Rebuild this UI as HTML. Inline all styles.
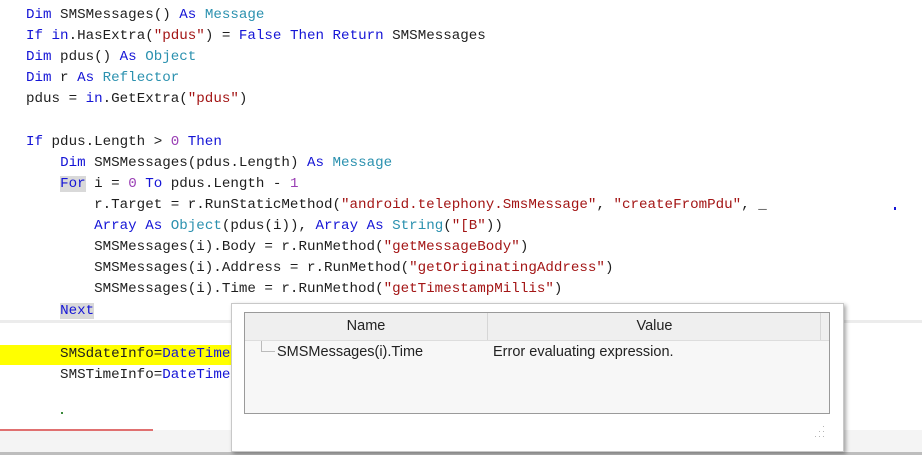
<!DOCTYPE html>
<html><head><meta charset="utf-8"><style>
html,body{margin:0;padding:0;}
body{width:922px;height:455px;position:relative;overflow:hidden;background:#fff;font-family:"Liberation Mono",monospace;font-size:14.2px;color:#1e1e1e;}
.l{position:absolute;left:26px;height:21px;line-height:21px;white-space:pre;}
.k{color:#1515d6}.t{color:#2b91af}.s{color:#a31515}.n{color:#9a3fb5}
.hl{background:#d9d9d9}
.pop{position:absolute;left:231px;top:303px;width:611px;height:147px;background:#fff;border:1px solid #c8c8c8;box-shadow:2px 2px 4px rgba(0,0,0,.35);font-family:"Liberation Sans",sans-serif;font-size:14.5px;color:#222;}
.tbl{position:absolute;left:12px;top:8px;width:584px;height:100px;border:1px solid #9a9a9a;background:#f7f7f7;}
.hd{position:absolute;left:0;top:0;width:584px;height:27px;background:#efefef;border-bottom:1px solid #ddd;}
</style></head><body>
<div class="l" style="top:5px"><span class="k">Dim</span> SMSMessages() <span class="k">As</span> <span class="t">Message</span></div>
<div class="l" style="top:26px"><span class="k">If</span> <span class="k">in</span>.HasExtra(<span class="s">"pdus"</span>) = <span class="k">False</span> <span class="k">Then</span> <span class="k">Return</span> SMSMessages</div>
<div class="l" style="top:47px"><span class="k">Dim</span> pdus() <span class="k">As</span> <span class="t">Object</span></div>
<div class="l" style="top:68px"><span class="k">Dim</span> r <span class="k">As</span> <span class="t">Reflector</span></div>
<div class="l" style="top:89px">pdus = <span class="k">in</span>.GetExtra(<span class="s">"pdus"</span>)</div>
<div class="l" style="top:132px"><span class="k">If</span> pdus.Length &gt; <span class="n">0</span> <span class="k">Then</span></div>
<div class="l" style="top:153px">    <span class="k">Dim</span> SMSMessages(pdus.Length) <span class="k">As</span> <span class="t">Message</span></div>
<div class="l" style="top:174px">    <span class="k hl">For</span> i = <span class="n">0</span> <span class="k">To</span> pdus.Length - <span class="n">1</span></div>
<div class="l" style="top:195px">        r.Target = r.RunStaticMethod(<span class="s">"android.telephony.SmsMessage"</span>, <span class="s">"createFromPdu"</span>, _</div>
<div class="l" style="top:216px">        <span class="k">Array</span> <span class="k">As</span> <span class="t">Object</span>(pdus(i)), <span class="k">Array</span> <span class="k">As</span> <span class="t">String</span>(<span class="s">"[B"</span>))</div>
<div class="l" style="top:237px">        SMSMessages(i).Body = r.RunMethod(<span class="s">"getMessageBody"</span>)</div>
<div class="l" style="top:258px">        SMSMessages(i).Address = r.RunMethod(<span class="s">"getOriginatingAddress"</span>)</div>
<div class="l" style="top:279px">        SMSMessages(i).Time = r.RunMethod(<span class="s">"getTimestampMillis"</span>)</div>
<div style="position:absolute;left:0;top:320px;width:922px;height:3px;background:#ececec"></div>
<div class="l" style="top:301px">    <span class="k hl">Next</span></div>
<div style="position:absolute;left:0;top:345px;width:232px;height:20px;background:#ffff00"></div>
<div class="l" style="top:344px">    SMSdateInfo=<span class="k">DateTime</span></div>
<div class="l" style="top:365px">    SMSTimeInfo=<span class="k">DateTime</span></div>
<div style="position:absolute;left:61px;top:412px;width:2px;height:2px;background:#3a8a3a"></div>
<div style="position:absolute;left:894px;top:207px;width:2px;height:3px;background:#1515d6"></div>
<div style="position:absolute;left:0;top:430px;width:922px;height:22px;background:#f4f4f4"></div>
<div style="position:absolute;left:0;top:429px;width:153px;height:2px;background:#e07070"></div>
<div style="position:absolute;left:0;top:452px;width:922px;height:3px;background:#bdbdbd"></div>
<div class="pop">
 <div class="tbl">
  <div class="hd">
   <div style="position:absolute;left:0;width:242px;top:0;height:27px;line-height:27px;text-align:center">Name</div>
   <div style="position:absolute;left:242px;top:0;width:1px;height:27px;background:#d6d6d6"></div>
   <div style="position:absolute;left:243px;width:333px;top:0;height:27px;line-height:27px;text-align:center">Value</div>
   <div style="position:absolute;left:575px;top:0;width:1px;height:27px;background:#d6d6d6"></div>
  </div>
  <div style="position:absolute;left:16px;top:28px;width:1px;height:10px;background:#bbb"></div>
  <div style="position:absolute;left:16px;top:38px;width:14px;height:1px;background:#bbb"></div>
  <div style="position:absolute;left:32px;top:28px;line-height:22px">SMSMessages(i).Time</div>
  <div style="position:absolute;left:248px;top:28px;line-height:22px">Error evaluating expression.</div>
 </div>
 <div style="position:absolute;left:580px;top:120px;width:14px;height:14px;color:#aaa;font-size:9px;line-height:5px;letter-spacing:1px;text-align:right">·<br>··<br>···</div>
</div>
</body></html>
